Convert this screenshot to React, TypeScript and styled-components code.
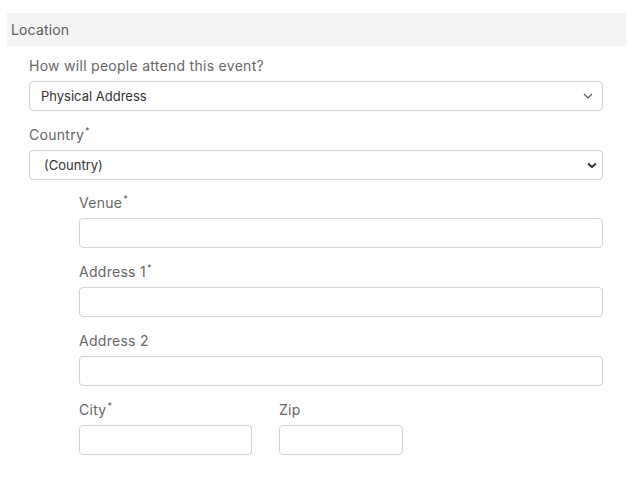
import React from 'react';
import styled, {createGlobalStyle} from 'styled-components';

const GlobalStyle = createGlobalStyle`
  html, body {
    margin: 0;
    padding: 0;
    background: #ffffff;
  }
  body {
    font-family: Inter, "Liberation Sans", Arial, sans-serif;
  }
`;

const Page = styled.div`
  padding: 13px 9px 0 7px;
`;

const SectionHeader = styled.div`
  height: 33px;
  display: flex;
  align-items: center;
  padding-left: 4px;
  background: #f4f4f4;
  color: #5c5c5c;
  font-size: 14px;
  letter-spacing: 0.15px;
`;

const Body = styled.div`
  padding: 10px 23px 0 22px;
`;

const Nested = styled.div`
  padding-left: 50px;
`;

const Field = styled.div<{$width?: number; $gap?: number}>`
  display: flex;
  flex-direction: column;
  margin-bottom: ${p => p.$gap ?? 14}px;
  width: ${p => (p.$width ? `${p.$width}px` : 'auto')};
`;

const Row = styled.div`
  display: flex;
  gap: 27px;
`;

const Label = styled.label`
  display: block;
  height: 20px;
  line-height: 20px;
  margin-bottom: 5px;
  font-size: 14px;
  letter-spacing: 0.28px;
  color: #666;
`;

const Req = styled.span`
  position: relative;
  top: -6px;
  margin-left: 1px;
  font-size: 9px;
  color: #555;
`;

const TextInput = styled.input`
  box-sizing: border-box;
  width: 100%;
  height: 30px;
  border: 1px solid #d2d2d2;
  border-radius: 4px;
  padding: 0 8px;
  font-family: inherit;
  font-size: 13px;
  color: #333;
  background: #fff;
  outline: none;
`;

const SelectWrap = styled.div`
  position: relative;
`;

const Select = styled.select<{$indent: number}>`
  box-sizing: border-box;
  width: 100%;
  height: 30px;
  appearance: none;
  border: 1px solid #d2d2d2;
  border-radius: 4px;
  padding: 0 30px 0 ${p => p.$indent}px;
  font-family: inherit;
  font-size: 13px;
  color: #333;
  background: #fff;
  outline: none;
`;

const Chevron = styled.svg<{$right: number}>`
  position: absolute;
  right: ${p => p.$right}px;
  top: 12px;
  pointer-events: none;
`;

const Required = ({children}: {children: React.ReactNode}) => (
  <Label>
    {children}
    <Req>*</Req>
  </Label>
);

export default function App() {
  return (
    <Page>
      <GlobalStyle />
      <SectionHeader>Location</SectionHeader>
      <Body>
        <Field>
          <Label>How will people attend this event?</Label>
          <SelectWrap>
            <Select $indent={11} defaultValue="physical">
              <option value="physical">Physical Address</option>
              <option value="online">Online</option>
            </Select>
            <Chevron $right={10} width="10" height="6" viewBox="0 0 10 6">
              <path d="M1 1 L5 5 L9 1" fill="none" stroke="#555" strokeWidth="1.2" />
            </Chevron>
          </SelectWrap>
        </Field>
        <Field $gap={13}>
          <Required>Country</Required>
          <SelectWrap>
            <Select $indent={14} defaultValue="">
              <option value="">(Country)</option>
            </Select>
            <Chevron $right={6} width="10" height="7" viewBox="0 0 10 7">
              <path d="M1.2 1.5 L5 5.2 L8.8 1.5" fill="none" stroke="#333" strokeWidth="2" />
            </Chevron>
          </SelectWrap>
        </Field>
        <Nested>
          <Field>
            <Required>Venue</Required>
            <TextInput />
          </Field>
          <Field>
            <Required>Address 1</Required>
            <TextInput />
          </Field>
          <Field>
            <Label>Address 2</Label>
            <TextInput />
          </Field>
          <Row>
            <Field $width={173}>
              <Required>City</Required>
              <TextInput />
            </Field>
            <Field $width={124}>
              <Label>Zip</Label>
              <TextInput />
            </Field>
          </Row>
        </Nested>
      </Body>
    </Page>
  );
}
